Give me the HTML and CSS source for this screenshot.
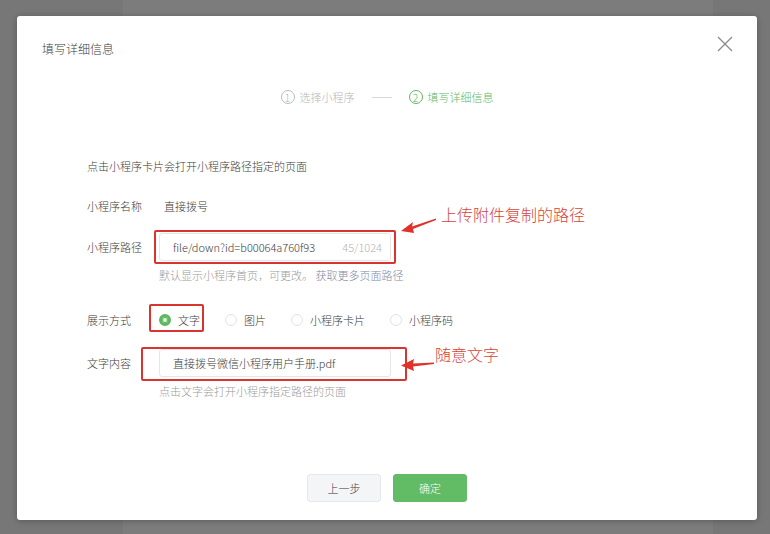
FILE: index.html
```html
<!DOCTYPE html>
<html lang="zh-CN">
<head>
  <meta charset="UTF-8" />
  <meta name="viewport" content="width=device-width, initial-scale=1.0" />
  <title>填写详细信息</title>
  <link rel="stylesheet" href="styles.css">
</head>
<body>

  <!-- Dialog -->
  <div class="modal">
    <div class="modal-head">
      <span class="modal-title">填写详细信息</span>
      <span class="modal-close">
        <svg width="16" height="16" viewBox="0 0 16 16"><path d="M1 1L15 15M15 1L1 15" stroke="#8a8a8a" stroke-width="1.3" fill="none"/></svg>
      </span>
    </div>

    <!-- Steps -->
    <div class="steps">
      <span class="step"><span class="step-num">1</span>选择小程序</span>
      <span class="step-line"></span>
      <span class="step current"><span class="step-num">2</span>填写详细信息</span>
    </div>

    <!-- Form -->
    <div class="form">
      <p class="intro">点击小程序卡片会打开小程序路径指定的页面</p>

      <div class="row row-name">
        <label>小程序名称</label>
        <span class="value">直接拨号</span>
      </div>

      <div class="row row-path">
        <label>小程序路径</label>
        <div class="input marked">
          <span class="input-text">file/down?id=b00064a760f93</span>
          <span class="counter">45/1024</span>
        </div>
      </div>
      <p class="hint hint-path">默认显示小程序首页，可更改。 <a href="#">获取更多页面路径</a></p>

      <div class="row row-mode">
        <label>展示方式</label>
        <div class="radios">
          <span class="radio checked marked"><i></i>文字</span>
          <span class="radio"><i></i>图片</span>
          <span class="radio"><i></i>小程序卡片</span>
          <span class="radio"><i></i>小程序码</span>
        </div>
      </div>

      <div class="row row-text">
        <label>文字内容</label>
        <div class="input marked wide">
          <span class="input-text">直接拨号微信小程序用户手册.pdf</span>
        </div>
      </div>
      <p class="hint hint-text">点击文字会打开小程序指定路径的页面</p>
    </div>

    <div class="modal-foot">
      <button class="btn">上一步</button>
      <button class="btn btn-primary">确定</button>
    </div>

    <!-- Notes drawn on top -->
    <div class="note note-path">
      <svg width="36" height="16" viewBox="0 0 36 16"><path d="M0 13L12 4L11 8.5L35 0.5L35 2L12 11L13 15Z" fill="#e0312a"/></svg>
      <span>上传附件复制的路径</span>
    </div>
    <div class="note note-text">
      <svg width="34" height="14" viewBox="0 0 34 14"><path d="M0 7.5L13 1L12 5.5L33 4.5L33 6L12 8.5L13 13Z" fill="#e0312a"/></svg>
      <span>随意文字</span>
    </div>
  </div>

</body>
</html>
```

FILE: styles.css
```css
* {
  margin: 0;
  padding: 0;
  box-sizing: border-box;
}
body {
  width: 770px;
  height: 534px;
  overflow: hidden;
  padding: 16px 13px 14px 17px;
  font-family: "Noto Sans CJK SC", "Noto Sans", sans-serif;
  font-weight: 300;
  color: #3c3c3c;
  background: linear-gradient(to right, #777 123px, #7c7c7c 123px, #7c7c7c 713px, #777 713px);
}
.modal {
  position: relative;
  width: 740px;
  height: 504px;
  background: #fff;
  border-radius: 3px;
  box-shadow: 0 1px 6px rgba(0, 0, 0, 0.25);
  display: flex;
  flex-direction: column;
}
.modal-head {
  height: 64px;
  display: flex;
  align-items: center;
  justify-content: space-between;
  padding: 0 24px 0 25px;
}
.modal-title {
  font-size: 12px;
}
.modal-close {
  display: flex;
  margin-top: -8px;
}
/* Steps */
.steps {
  height: 34px;
  display: flex;
  align-items: center;
  justify-content: center;
  font-size: 11px;
  color: #b5b5b5;
}
.step {
  display: flex;
  align-items: center;
}
.step-num {
  width: 14px;
  height: 14px;
  border: 1px solid #bbb;
  border-radius: 50%;
  display: flex;
  align-items: center;
  justify-content: center;
  font-size: 10px;
  margin-right: 5px;
}
.step.current {
  color: #5cb860;
}
.step.current .step-num {
  border-color: #5cb860;
}
.step-line {
  width: 20px;
  height: 1px;
  background: #d6d6d6;
  margin: 0 17px;
}
/* Form */
.form {
  padding-left: 70px;
  font-size: 11px;
}
.intro {
  line-height: 20px;
  margin-top: 42px;
}
.row {
  display: flex;
  align-items: center;
  height: 28px;
}
.row label {
  width: 72px;
}
.row-name {
  margin-top: 16px;
}
.row-name .value {
  padding-left: 5px;
}
.row-path {
  margin-top: 13px;
}
.row-mode {
  margin-top: 23px;
}
.row-text {
  margin-top: 15px;
}
.input {
  position: relative;
  width: 232px;
  height: 28px;
  border: 1px solid #e6e6e6;
  border-radius: 3px;
  display: flex;
  align-items: center;
  justify-content: space-between;
  padding: 0 8px 0 13px;
}
.counter {
  color: #b2b2b2;
}
.hint {
  line-height: 16px;
  margin-top: 6px;
  padding-left: 72px;
  color: #9a9a9a;
}
.hint a {
  color: #7f8aa3;
  text-decoration: none;
}
/* Radios */
.radios {
  display: flex;
  gap: 25px;
}
.radio {
  position: relative;
  display: flex;
  align-items: center;
  gap: 7px;
}
.radio i {
  width: 12px;
  height: 12px;
  border: 1px solid #e2e2e2;
  border-radius: 50%;
}
.radio.checked i {
  border: 3px solid #5cb860;
  background: #e9f5e9;
  box-shadow: inset 0 0 0 1px #5cb860;
}
/* Red marks */
.marked::after {
  content: "";
  position: absolute;
  border: 2px solid #d9352e;
  border-radius: 2px;
}
.row-path .marked::after {
  left: -6px;
  top: -4px;
  right: -6px;
  bottom: -4px;
}
.row-text .marked::after {
  left: -19px;
  top: -3px;
  right: -17px;
  bottom: -5px;
}
.radio.marked::after {
  left: -10px;
  top: -8px;
  right: -4px;
  bottom: -4px;
}
/* Footer */
.modal-foot {
  margin-top: auto;
  padding-bottom: 18px;
  display: flex;
  justify-content: center;
  gap: 12px;
}
.btn {
  width: 74px;
  height: 28px;
  border: 1px solid #e6e7ea;
  border-radius: 3px;
  background: #f4f5f7;
  color: #353535;
  font-family: inherit;
  font-weight: 300;
  font-size: 11px;
}
.btn-primary {
  background: #62bb65;
  border-color: #62bb65;
  color: #fff;
}
/* Notes */
.note {
  position: absolute;
  display: flex;
  align-items: flex-start;
  color: #d9423a;
  font-size: 16px;
  line-height: 20px;
}
.note-path {
  left: 384px;
  top: 188px;
}
.note-path svg {
  margin-top: 14px;
  margin-right: 4px;
}
.note-text {
  left: 384px;
  top: 328px;
}
.note-text svg {
  margin-top: 14px;
  margin-right: 0;
}
```
